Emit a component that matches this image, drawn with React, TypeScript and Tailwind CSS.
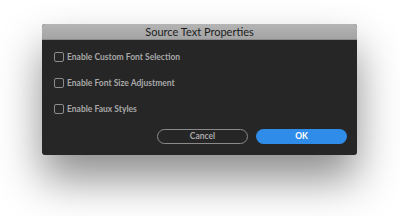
export default function App() {
  const options = ['Enable Custom Font Selection', 'Enable Font Size Adjustment', 'Enable Faux Styles'];

  return (
    <div className="w-[400px] h-[216px] bg-white pt-[24px] pl-[42px]" style={{ fontFamily: 'Lato, "Liberation Sans", sans-serif' }}>
      <div className="w-[315px] h-[131px] flex flex-col rounded-[3px] overflow-hidden bg-[#262626] shadow-[0_24px_44px_rgba(0,0,0,0.45)]">
        {/* title bar */}
        <div className="h-[16px] flex items-center justify-center bg-gradient-to-b from-[#b4b4b4] to-[#a4a4a4] border-b border-[#8a8a8a]">
          <span className="text-[11px] leading-none text-[#1c1c1c]">Source Text Properties</span>
        </div>

        <div className="flex-1 flex flex-col pt-[4px] pl-[12px] pr-[10px] pb-[11px]">
          {options.map((label) => (
            <div key={label} className="h-[26px] flex items-center gap-[3px]">
              <div className="w-[10px] h-[10px] rounded-[2px] border border-[#8c8c8c]" />
              <span className="text-[8.5px] font-bold text-[#a8a8a8]">{label}</span>
            </div>
          ))}

          <div className="mt-auto flex justify-end gap-[8px]">
            <button className="w-[91px] h-[15px] rounded-full border border-[#8a8a8a] text-[8.5px] font-bold text-[#a8a8a8] leading-none">
              Cancel
            </button>
            <button className="w-[91px] h-[15px] rounded-full bg-[#2f8ce8] text-[8.5px] font-bold text-white leading-none">
              OK
            </button>
          </div>
        </div>
      </div>
    </div>
  );
}
